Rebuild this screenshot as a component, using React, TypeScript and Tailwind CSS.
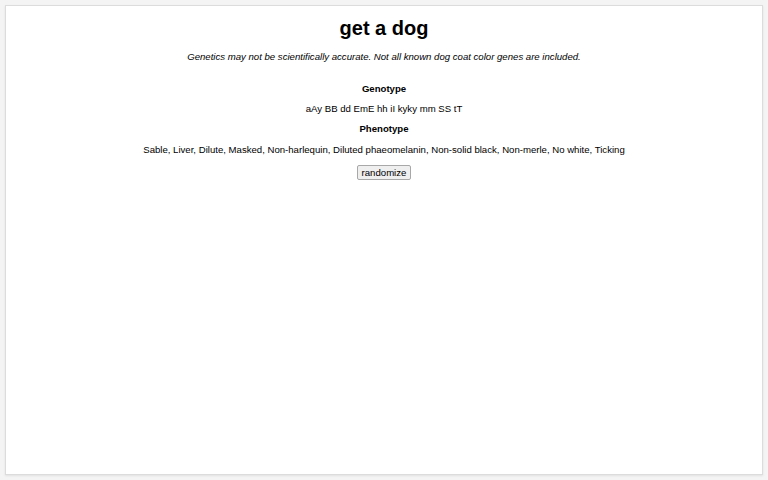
const genotype = "aAy BB dd EmE hh iI kyky mm SS tT";
const phenotype = [
  "Sable",
  "Liver",
  "Dilute",
  "Masked",
  "Non-harlequin",
  "Diluted phaeomelanin",
  "Non-solid black",
  "Non-merle",
  "No white",
  "Ticking",
];

export default function App() {
  return (
    <div className="h-[480px] bg-[#f4f4f4] p-[5px] font-['Liberation_Sans',Arial,sans-serif] text-black">
      <div className="flex h-full flex-col items-center border border-[#dcdcdc] bg-white shadow-[0_1px_2px_rgba(0,0,0,0.08)]">
        <h1 className="mt-[10px] text-[20px] font-bold leading-[24px]">get a dog</h1>
        <p className="mt-[11px] text-[9.6px] italic leading-[12px]">
          Genetics may not be scientifically accurate. Not all known dog coat color genes are included.
        </p>
        <h2 className="mt-[20px] text-[9.6px] font-bold leading-[12px]">Genotype</h2>
        <p className="mt-[8px] text-[9.6px] leading-[12px]">{genotype}</p>
        <h2 className="mt-[8px] text-[9.6px] font-bold leading-[12px]">Phenotype</h2>
        <p className="mt-[9px] text-[9.6px] leading-[12px]">{phenotype.join(", ")}</p>
        <button className="mt-[9px] rounded-[2px] border border-[#a8a8a8] bg-[#efefef] px-[4px] text-[9.6px] leading-[13px]">
          randomize
        </button>
      </div>
    </div>
  );
}
